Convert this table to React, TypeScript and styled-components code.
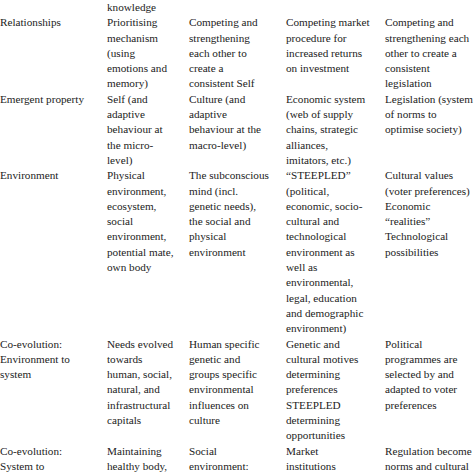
import styled, { createGlobalStyle } from "styled-components";

const GlobalStyle = createGlobalStyle`
    html, body {
        margin: 0;
        padding: 0;
        background: #ffffff;
    }
    body {
        width: 474px;
        height: 474px;
        overflow: hidden;
    }
`;

const Page = styled.div`
    width: 474px;
    height: 474px;
    overflow: hidden;
    background: #ffffff;
`;

const Table = styled.div`
    display: grid;
    grid-template-columns: 107px 82px 97px 99px 1fr;
    font-family: "Liberation Serif", "Times New Roman", serif;
    font-size: 11.2px;
    line-height: 15.3px;
    color: #222222;
`;

const Cell = styled.div`
    display: flex;
    flex-direction: column;
`;

const Line = styled.span`
    white-space: nowrap;
`;

type Row = string[][];

const rows: Row[] = [
    [[], ["knowledge"], [], [], []],
    [
        ["Relationships"],
        ["Prioritising", "mechanism", "(using", "emotions and", "memory)"],
        ["Competing and", "strengthening", "each other to", "create a", "consistent Self"],
        ["Competing market", "procedure for", "increased returns", "on investment"],
        ["Competing and", "strengthening each", "other to create a", "consistent", "legislation"],
    ],
    [
        ["Emergent property"],
        ["Self (and", "adaptive", "behaviour at", "the micro-", "level)"],
        ["Culture (and", "adaptive", "behaviour at the", "macro-level)"],
        ["Economic system", "(web of supply", "chains, strategic", "alliances,", "imitators, etc.)"],
        ["Legislation (system", "of norms to", "optimise society)"],
    ],
    [
        ["Environment"],
        ["Physical", "environment,", "ecosystem,", "social", "environment,", "potential mate,", "own body"],
        ["The subconscious", "mind (incl.", "genetic needs),", "the social and", "physical", "environment"],
        [
            "\u201CSTEEPLED\u201D",
            "(political,",
            "economic, socio-",
            "cultural and",
            "technological",
            "environment as",
            "well as",
            "environmental,",
            "legal, education",
            "and demographic",
            "environment)",
        ],
        ["Cultural values", "(voter preferences)", "Economic", "\u201Crealities\u201D", "Technological", "possibilities"],
    ],
    [
        ["Co-evolution:", "Environment to", "system"],
        ["Needs evolved", "towards", "human, social,", "natural, and", "infrastructural", "capitals"],
        ["Human specific", "genetic and", "groups specific", "environmental", "influences on", "culture"],
        ["Genetic and", "cultural motives", "determining", "preferences", "STEEPLED", "determining", "opportunities"],
        ["Political", "programmes are", "selected by and", "adapted to voter", "preferences"],
    ],
    [
        ["Co-evolution:", "System to"],
        ["Maintaining", "healthy body,"],
        ["Social", "environment:"],
        ["Market", "institutions"],
        ["Regulation become", "norms and cultural"],
    ],
];

export default function App() {
    return (
        <Page>
            <GlobalStyle />
            <Table>
                {rows.map((row, r) =>
                    row.map((cell, c) => (
                        <Cell key={`${r}-${c}`}>
                            {cell.map((text, i) => (
                                <Line key={i}>{text}</Line>
                            ))}
                        </Cell>
                    ))
                )}
            </Table>
        </Page>
    );
}
